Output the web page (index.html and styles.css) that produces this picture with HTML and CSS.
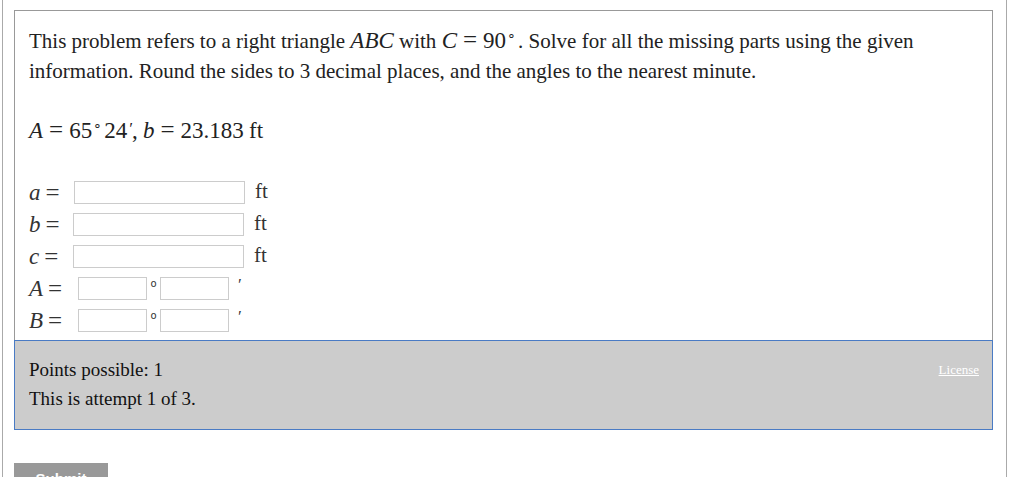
FILE: index.html
```html
<!DOCTYPE html>
<html>
<head>
<meta charset="utf-8">
<link rel="stylesheet" href="styles.css">
</head>
<body>
<div class="page">
  <div class="question">
    <p class="intro">This problem refers to a right triangle <span class="mi">ABC</span> with <span class="mi">C</span><span class="mo">=</span><span class="mn">90</span><sup class="deg">∘</sup>. Solve for all the missing parts using the given information. Round the sides to 3 decimal places, and the angles to the nearest minute.</p>
    <p class="given"><span class="mi">A</span><span class="mo">=</span><span class="mn">65</span><sup class="deg">∘</sup><span class="mn">24</span><span class="prime">′</span><span class="mn">,</span> <span class="mi">b</span><span class="mo">=</span><span class="mn">23.183</span> <span class="mn">ft</span></p>
    <div class="rows">
      <div class="row">
        <span class="lbl"><span class="mi">a</span><span class="mo">=</span></span>
        <span class="field wide w-a"></span>
        <span class="unit">ft</span>
      </div>
      <div class="row">
        <span class="lbl"><span class="mi">b</span><span class="mo">=</span></span>
        <span class="field wide"></span>
        <span class="unit">ft</span>
      </div>
      <div class="row">
        <span class="lbl"><span class="mi">c</span><span class="mo">=</span></span>
        <span class="field wide"></span>
        <span class="unit">ft</span>
      </div>
      <div class="row">
        <span class="lbl"><span class="mi">A</span><span class="mo">=</span></span>
        <span class="field small ang"></span>
        <span class="dsym">o</span>
        <span class="field small"></span>
        <span class="psym">′</span>
      </div>
      <div class="row">
        <span class="lbl"><span class="mi">B</span><span class="mo">=</span></span>
        <span class="field small ang"></span>
        <span class="dsym">o</span>
        <span class="field small"></span>
        <span class="psym">′</span>
      </div>
    </div>
  </div>
  <div class="info">
    <div class="info-line"><span>Points possible: 1</span><a class="license" href="#">License</a></div>
    <div class="info-line">This is attempt 1 of 3.</div>
  </div>
  <div class="actions">
    <button class="submit">Submit</button>
  </div>
</div>
</body>
</html>
```

FILE: styles.css
```css
html, body {
  margin: 0;
  padding: 0;
  background: #fff;
  overflow: hidden;
}
body {
  font-family: "Liberation Serif", "Times New Roman", serif;
  color: #222;
}
.page {
  margin-left: 2px;
  width: 1005px;
  border-left: 1px solid #aaa;
  border-right: 1px solid #aaa;
  padding: 10px 13px 0 11px;
  height: 477px;
  box-sizing: border-box;
  overflow: hidden;
}
.question {
  border: 1px solid #999;
  border-bottom: none;
  padding: 15px 14px 8px 14px;
  font-size: 21px;
  line-height: 30px;
}
.question p {
  margin: 0;
}
.intro {
  margin-bottom: 30px !important;
}
.mi {
  font-style: italic;
  font-size: 23px;
  line-height: 20px;
}
.mn {
  font-size: 23px;
  line-height: 20px;
}
.mo {
  margin: 0 6px;
  font-size: 25px;
  line-height: 20px;
}
.deg {
  font-size: 14px;
  vertical-align: 8px;
  line-height: 0;
  margin-left: 1px;
  margin-right: 2px;
}
.prime {
  font-style: italic;
  font-size: 17px;
  vertical-align: 4px;
  line-height: 0;
  margin-left: 1px;
}
.given {
  margin-bottom: 35px !important;
}
.rows {
  display: flex;
  flex-direction: column;
  gap: 9px;
}
.row {
  display: flex;
  align-items: center;
  height: 23px;
  color: #333;
}
.lbl {
  display: inline-flex;
  align-items: center;
  width: 44px;
  line-height: 23px;
}
.lbl .mo {
  margin: 0 0 0 5px;
}
.field {
  display: inline-block;
  height: 21px;
  border: 1px solid #ccc;
  background: #fff;
  box-sizing: content-box;
}
.wide {
  width: 169px;
}
.w-a {
  margin-left: 1px;
}
.small {
  width: 67px;
}
.ang {
  margin-left: 5px;
}
.dsym {
  font-family: "DejaVu Sans", sans-serif;
  font-size: 10px;
  width: 13px;
  text-align: center;
  align-self: flex-start;
  line-height: 14px;
  margin-left: 0;
}
.psym {
  font-size: 17px;
  font-style: italic;
  margin-left: 8px;
  align-self: flex-start;
  line-height: 16px;
}
.unit {
  margin-left: 10px;
  line-height: 20px;
  align-self: flex-start;
}
.info {
  background: #ccc;
  border: 1px solid #4a7bc4;
  padding: 14px 13px 16px 14px;
  font-size: 19px;
  line-height: 29px;
  color: #111;
}
.info-line {
  display: flex;
  justify-content: space-between;
  align-items: center;
}
.license {
  font-size: 13px;
  color: #fff;
  text-decoration: underline;
}
.actions {
  padding-top: 33px;
}
.submit {
  display: flex;
  align-items: flex-start;
  justify-content: center;
  width: 94px;
  height: 36px;
  background: #999;
  border: none;
  color: #fff;
  font-family: "Liberation Sans", Arial, sans-serif;
  font-weight: bold;
  font-size: 15px;
  line-height: 18px;
  padding: 7px 0 0 0;
  box-sizing: border-box;
}
```
